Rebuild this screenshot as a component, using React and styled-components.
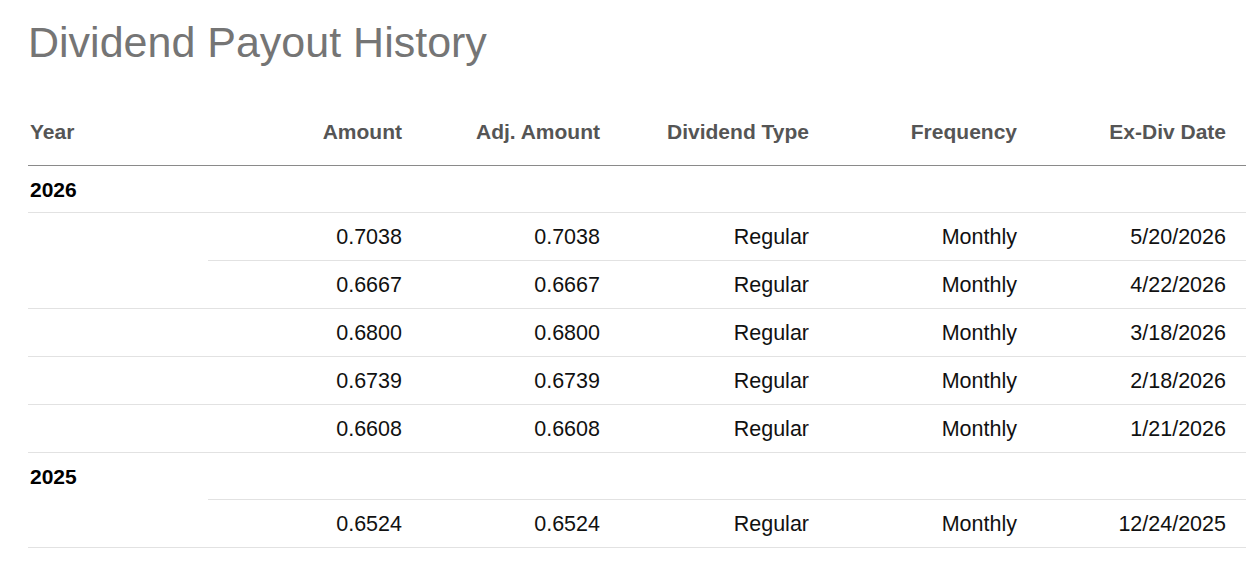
import React from 'react';
import styled, { createGlobalStyle } from 'styled-components';

const GlobalStyle = createGlobalStyle`
  body {
    margin: 0;
    background: #fff;
    font-family: "Liberation Sans", Arial, sans-serif;
  }
`;

const Page = styled.div`
  padding: 17px 0 0 28px;
`;

const Title = styled.h1`
  margin: 0 0 34px;
  font-size: 43px;
  font-weight: normal;
  color: #757575;
  line-height: 50px;
`;

const COLS = '180px 214px 198px 209px 208px 209px';

const HeadRow = styled.div`
  display: grid;
  grid-template-columns: ${COLS};
  height: 65px;
  align-items: center;
  border-bottom: 1px solid #8a8a8a;
  box-sizing: border-box;
`;

const HeadCell = styled.div`
  font-size: 21px;
  font-weight: bold;
  color: #555;
  text-align: ${p => (p.$left ? 'left' : 'right')};
  padding: ${p => (p.$left ? '0 0 2px 2px' : '0 20px 2px 0')};
`;

const Row = styled.div`
  display: grid;
  grid-template-columns: ${COLS};
  height: ${p => (p.$year ? '47px' : '48px')};
  align-items: center;
  position: relative;
  &::after {
    content: '';
    position: absolute;
    bottom: 0;
    right: 0;
    left: ${p => (p.$short ? '180px' : '0')};
    border-bottom: 1px solid #e2e2e2;
  }
`;

const YearCell = styled.div`
  font-size: 21px;
  font-weight: bold;
  color: #000;
  padding-left: 2px;
`;

const Cell = styled.div`
  font-size: 21.5px;
  color: #111;
  text-align: right;
  padding-right: 20px;
`;

const groups = [
  {
    year: '2026',
    rows: [
      ['0.7038', '5/20/2026', true],
      ['0.6667', '4/22/2026'],
      ['0.6800', '3/18/2026'],
      ['0.6739', '2/18/2026'],
      ['0.6608', '1/21/2026'],
    ],
  },
  { year: '2025', short: true, rows: [['0.6524', '12/24/2025']] },
];

export default function App() {
  return (
    <Page>
      <GlobalStyle />
      <Title>Dividend Payout History</Title>
      <HeadRow>
        <HeadCell $left>Year</HeadCell>
        <HeadCell>Amount</HeadCell>
        <HeadCell>Adj. Amount</HeadCell>
        <HeadCell>Dividend Type</HeadCell>
        <HeadCell>Frequency</HeadCell>
        <HeadCell>Ex-Div Date</HeadCell>
      </HeadRow>
      {groups.map(g => (
        <React.Fragment key={g.year}>
          <Row $year $short={g.short}>
            <YearCell>{g.year}</YearCell>
          </Row>
          {g.rows.map(([amt, date, short]) => (
            <Row key={date} $short={short}>
              <div />
              <Cell>{amt}</Cell>
              <Cell>{amt}</Cell>
              <Cell>Regular</Cell>
              <Cell>Monthly</Cell>
              <Cell>{date}</Cell>
            </Row>
          ))}
        </React.Fragment>
      ))}
    </Page>
  );
}
